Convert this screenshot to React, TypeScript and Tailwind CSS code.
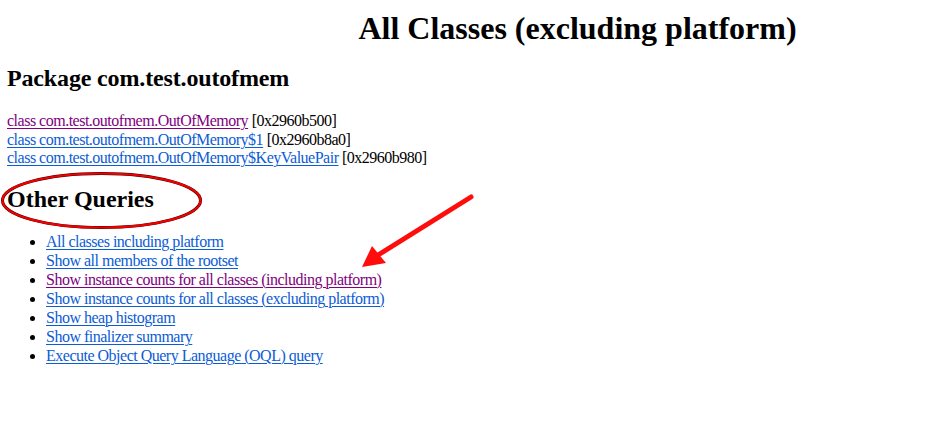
import React from "react";

const classLinks = [
  { name: "class com.test.outofmem.OutOfMemory", addr: "[0x2960b500]", visited: true },
  { name: "class com.test.outofmem.OutOfMemory$1", addr: "[0x2960b8a0]", visited: false },
  { name: "class com.test.outofmem.OutOfMemory$KeyValuePair", addr: "[0x2960b980]", visited: false },
];

const queries = [
  { label: "All classes including platform", visited: false },
  { label: "Show all members of the rootset", visited: false },
  { label: "Show instance counts for all classes (including platform)", visited: true },
  { label: "Show instance counts for all classes (excluding platform)", visited: false },
  { label: "Show heap histogram", visited: false },
  { label: "Show finalizer summary", visited: false },
  { label: "Execute Object Query Language (OQL) query", visited: false },
];

function linkClass(visited: boolean) {
  return visited
    ? "text-[#800080] underline underline-offset-[2px] decoration-1"
    : "text-[#0b5cd5] underline underline-offset-[2px] decoration-1";
}

export default function App() {
  return (
    <div
      className="relative w-[935px] h-[436px] overflow-hidden bg-white text-black"
      style={{ fontFamily: '"Liberation Serif", "Times New Roman", serif' }}
    >
      {/* title is centred on a wider page than the window shows */}
      <h1 className="w-[1155px] text-center text-[32px] leading-[37px] font-bold mt-[10px]">
        All Classes (excluding platform)
      </h1>

      <div className="pl-[7px]">
        <h2 className="text-[24px] leading-[28px] font-bold tracking-[-0.15px] mt-[17px]">
          Package com.test.outofmem
        </h2>

        <div className="mt-[20.4px] text-[16px] leading-[18.4px] tracking-[-0.5px]">
          {classLinks.map((c) => (
            <div key={c.name}>
              <a href="#" className={linkClass(c.visited)}>
                {c.name}
              </a>{" "}
              {c.addr}
            </div>
          ))}
        </div>

        <h2 className="text-[24px] leading-[28px] font-bold mt-[17.3px]">Other Queries</h2>

        <ul className="mt-[18.7px] list-disc pl-[39px] text-[16px] leading-[19px] tracking-[-0.5px]">
          {queries.map((q) => (
            <li key={q.label}>
              <a href="#" className={linkClass(q.visited)}>
                {q.label}
              </a>
            </li>
          ))}
        </ul>
      </div>

      {/* annotations drawn over the page */}
      <svg className="absolute left-0 top-0 pointer-events-none" width="935" height="436" viewBox="0 0 935 436">
        <ellipse cx="101.5" cy="200.5" rx="99" ry="27" fill="none" stroke="#3a0000" strokeWidth="3" />
        <ellipse cx="101.5" cy="200.5" rx="99" ry="27" fill="none" stroke="#f00000" strokeWidth="2.2" />
        <line x1="471" y1="197" x2="378" y2="255" stroke="#ff0d0d" strokeWidth="5" strokeLinecap="round" />
        <polygon points="362,267 372,246 386,263" fill="#ff0d0d" />
      </svg>
    </div>
  );
}
